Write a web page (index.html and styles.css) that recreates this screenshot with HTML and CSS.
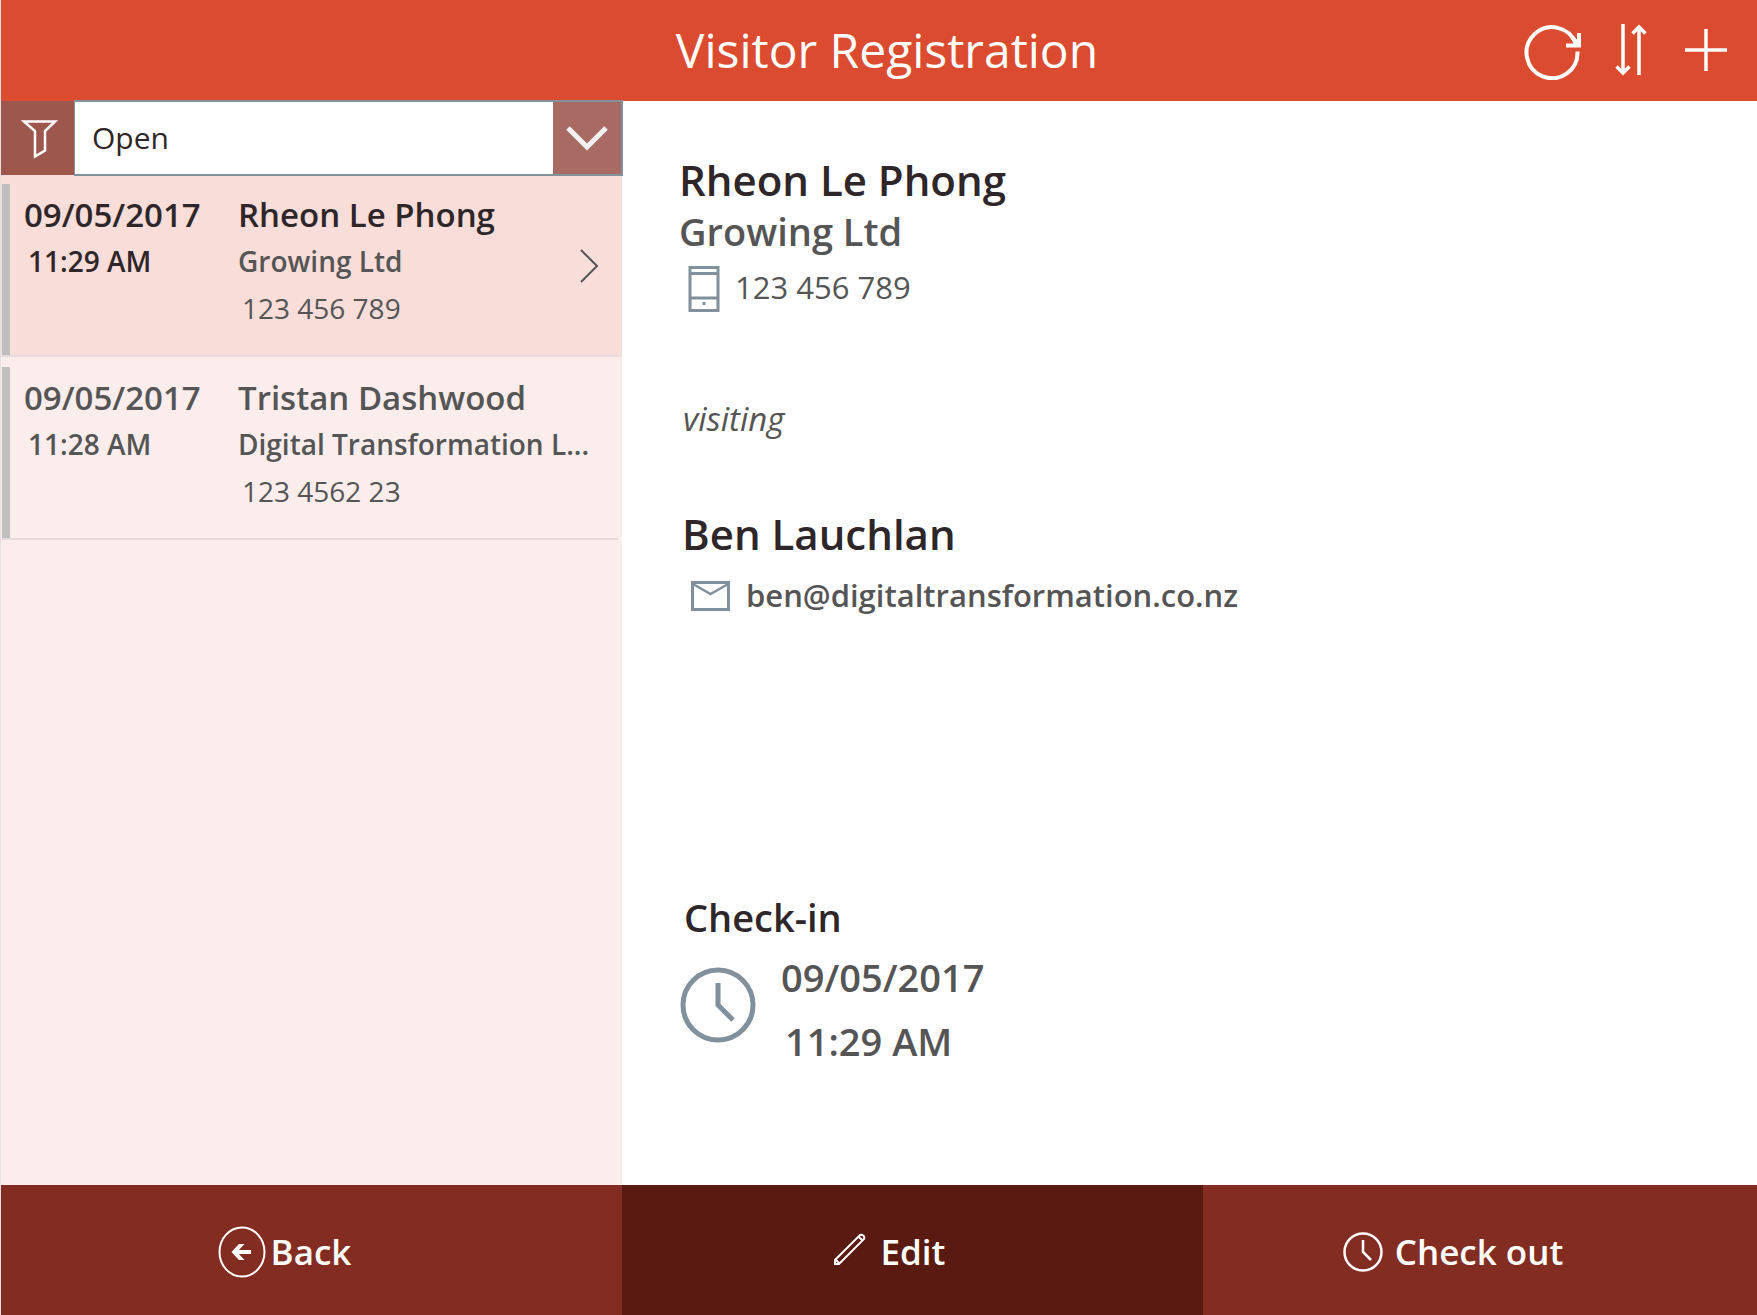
FILE: index.html
```
<!DOCTYPE html>
<html lang="en">
<head>
    <meta charset="UTF-8">
    <meta name="viewport" content="width=device-width, initial-scale=1.0">
    <title>Visitor Registration</title>
    <link rel="stylesheet" href="styles.css">
</head>
<body>
    <header class="topbar">
        <h1>Visitor Registration</h1>
        <div class="topbar-actions">
            <button type="button" class="icon-button" aria-label="Refresh">
                <svg width="59" height="60" viewBox="0 0 59 60" fill="none" stroke="#fff" stroke-width="4">
                    <path d="M55.500 31.500A25.500 25.500 0 1 1 54 24"/>
                    <path d="M44 25.500H57V13"/>
                    <path d="M50 17L57 25.500"/>
                </svg>
            </button>
            <button type="button" class="icon-button" aria-label="Sort">
                <svg width="38" height="52" viewBox="0 0 38 52" fill="none" stroke="#fff" stroke-width="3.500">
                    <path d="M9 0V49M2.500 42.500L9 49L15.500 42.500"/>
                    <path d="M25 51V3M18.500 9.500L25 3L31.500 9.500"/>
                </svg>
            </button>
            <button type="button" class="icon-button" aria-label="New visitor">
                <svg width="42" height="42" viewBox="0 0 42 42" fill="none" stroke="#fff" stroke-width="3.500">
                    <path d="M21 0V42M0 21H42"/>
                </svg>
            </button>
        </div>
    </header>

    <div class="content">
        <aside class="sidebar">
            <div class="filter">
                <label class="filter-icon" for="status" aria-label="Filter by status">
                    <svg width="40" height="42" viewBox="0 0 40 42" fill="none" stroke="#fff" stroke-width="2.500">
                        <path d="M4 4.500H35L25 14V33.500L15 39.500V14Z"/>
                    </svg>
                </label>
                <div class="filter-select">
                    <select id="status">
                        <option>Open</option>
                        <option>Closed</option>
                    </select>
                    <span class="filter-arrow">
                        <svg width="42" height="26" viewBox="0 0 42 26" fill="none" stroke="#f2f2f2" stroke-width="5">
                            <path d="M2 3L21 22L40 3"/>
                        </svg>
                    </span>
                </div>
            </div>

            <nav class="visitors">
                <a href="#" class="visitor selected">
                    <div class="visitor-row">
                        <div class="visitor-when">
                            <div class="line-1">09/05/2017</div>
                            <div class="line-2 indent">11:29 AM</div>
                        </div>
                        <div class="visitor-info">
                            <div class="line-1">Rheon Le Phong</div>
                            <div class="line-2 muted">Growing Ltd</div>
                            <div class="line-3 indent">123 456 789</div>
                        </div>
                        <svg class="visitor-arrow" width="20" height="36" viewBox="0 0 20 36" fill="none" stroke="#555" stroke-width="2">
                            <path d="M2 2L18 18L2 34"/>
                        </svg>
                    </div>
                </a>
                <a href="#" class="visitor">
                    <div class="visitor-row">
                        <div class="visitor-when">
                            <div class="line-1">09/05/2017</div>
                            <div class="line-2 indent">11:28 AM</div>
                        </div>
                        <div class="visitor-info">
                            <div class="line-1">Tristan Dashwood</div>
                            <div class="line-2 muted">Digital Transformation L...</div>
                            <div class="line-3 indent">123 4562 23</div>
                        </div>
                    </div>
                </a>
            </nav>
        </aside>

        <main class="details">
            <section>
                <h2>Rheon Le Phong</h2>
                <div class="company">Growing Ltd</div>
                <div class="contact">
                    <svg width="32" height="50" viewBox="0 0 32 50" fill="none" stroke="#80909c" stroke-width="3">
                        <path d="M2 5.500H30V48.500H2ZM2 11.500H30M2 36H30"/>
                        <path d="M14.500 41.500H17.500"/>
                    </svg>
                    <span>123 456 789</span>
                </div>
            </section>

            <p class="visiting">visiting</p>

            <section class="host">
                <h2>Ben Lauchlan</h2>
                <div class="contact">
                    <svg width="40" height="32" viewBox="0 0 40 32" fill="none" stroke="#80909c" stroke-width="3">
                        <path d="M1.500 3.500H37.500V30.500H1.500Z"/>
                        <path d="M2 5L19.500 15L37 5" stroke-width="2.500"/>
                    </svg>
                    <a href="#">ben@digitaltransformation.co.nz</a>
                </div>
            </section>

            <section class="checkin">
                <h3>Check-in</h3>
                <div class="checkin-row">
                    <svg width="76" height="76" viewBox="0 0 76 76" fill="none" stroke="#80909c" stroke-width="5">
                        <circle cx="38" cy="38" r="35"/>
                        <path d="M38 16V38L53 53"/>
                    </svg>
                    <div class="checkin-time">
                        <div>09/05/2017</div>
                        <div class="indent">11:29 AM</div>
                    </div>
                </div>
            </section>
        </main>
    </div>

    <footer class="actions">
        <button type="button" class="action back">
            <svg width="48" height="52" viewBox="0 0 48 52" fill="none" stroke="#fff">
                <ellipse cx="24" cy="26" rx="22.500" ry="24.500" stroke-width="2"/>
                <path d="M33 26H16" stroke-width="4"/>
                <path d="M13.500 26L21 18H26.500L19 26L26.500 34H21Z" fill="#fff" stroke="none"/>
            </svg>
            Back
        </button>
        <button type="button" class="action edit">
            <svg width="32" height="38" viewBox="0 0 32 38" fill="none" stroke="#fff" stroke-width="2">
                <path d="M1 31V27L26 2A3 3 0 0 1 30 6L5 31Z"/>
                <path d="M1.500 26.500L5.500 30.500M24.500 3.500L28.500 7.500"/>
            </svg>
            Edit
        </button>
        <button type="button" class="action checkout">
            <svg width="40" height="40" viewBox="0 0 40 40" fill="none" stroke="#fff" stroke-width="2.500">
                <circle cx="20" cy="20" r="18.500"/>
                <path d="M20 8V20L28 28"/>
            </svg>
            Check out
        </button>
    </footer>
</body>
</html>
```

FILE: styles.css
```
* {
    margin: 0;
    padding: 0;
    box-sizing: border-box;
}

body {
    display: flex;
    flex-direction: column;
    min-height: 100vh;
    border-left: 1px solid #e4e0e0;
    font-family: "Open Sans", "Noto Sans", sans-serif;
    font-weight: 600;
    color: #2e2628;
    background: #fff;
}

button, select {
    font: inherit;
    border: 0;
    cursor: pointer;
}

a {
    color: inherit;
    text-decoration: none;
}

svg {
    display: block;
    flex: none;
}

/* Header */
.topbar {
    display: grid;
    grid-template-columns: 1fr auto 1fr;
    align-items: center;
    height: 101px;
    padding: 0 30px 2px 46px;
    color: #fff;
    background: #db4b2f;
}

.topbar h1 {
    grid-column: 2;
    font-size: 48px;
    line-height: 60px;
    font-weight: 400;
}

.topbar-actions {
    display: flex;
    justify-content: flex-end;
    align-items: center;
    gap: 33px;
}

.icon-button {
    background: none;
}

/* Columns */
.content {
    flex: 1;
    display: grid;
    grid-template-columns: 621fr 1135fr;
}

.sidebar {
    background: #fbedeb;
    min-width: 0;
}

/* Filter */
.filter {
    display: flex;
    height: 74px;
}

.filter-icon {
    display: flex;
    align-items: center;
    justify-content: center;
    width: 73px;
    padding-left: 4px;
    background: #9d574c;
}

.filter-select {
    position: relative;
    z-index: 1;
    flex: 1;
    margin: -1px -1px -1px 0;
    border: 2px solid #82919c;
    border-left-width: 1px;
}

.filter-select select {
    width: 100%;
    height: 100%;
    padding: 0 84px 2px 17px;
    appearance: none;
    border-radius: 0;
    font-size: 30px;
    font-weight: 400;
    color: #2e2628;
    background: #fff;
}

.filter-arrow {
    position: absolute;
    top: 0;
    right: 0;
    bottom: 0;
    display: flex;
    align-items: center;
    justify-content: center;
    width: 68px;
    background: #a86b64;
    pointer-events: none;
}

/* Visitor list */
.visitors {
    display: flex;
    flex-direction: column;
    gap: 1px;
}

.visitor {
    padding: 9px 4px 0 1px;
    color: #555;
}

.visitor.selected {
    color: #2e2628;
    background: #f9ddd9;
}

.visitor-row {
    display: flex;
    border-bottom: 2px solid #e6dada;
}

.visitor-row::before {
    content: "";
    width: 8px;
    background: #c0bfbf;
}

.visitor-when {
    width: 213px;
    padding: 10px 0 24px 14px;
}

.visitor-info {
    flex: 1;
    min-width: 0;
    padding: 10px 0 24px 15px;
}

.line-1 {
    font-size: 33px;
    line-height: 42px;
}

.line-2 {
    font-size: 28px;
    line-height: 50px;
    white-space: nowrap;
    overflow: hidden;
    text-overflow: ellipsis;
}

.line-3 {
    font-size: 28px;
    line-height: 45px;
    font-weight: 400;
    color: #555;
}

.muted {
    color: #555;
}

.indent {
    padding-left: 4px;
}

.visitor-arrow {
    margin: 64px 19px 0 0;
}

/* Details */
.details {
    display: flex;
    flex-direction: column;
    padding: 51px 40px 112px 57px;
}

.details h2 {
    font-size: 42px;
    line-height: 56px;
    font-weight: 600;
}

.company {
    font-size: 38px;
    line-height: 46px;
    color: #555;
}

.contact {
    display: flex;
    align-items: center;
    gap: 15px;
    height: 66px;
    padding-left: 9px;
    font-size: 31px;
    color: #555;
}

.contact span {
    font-weight: 400;
}

.visiting {
    margin-top: 77px;
    padding-left: 4px;
    font-size: 33px;
    line-height: 44px;
    font-style: italic;
    font-weight: 400;
    color: #555;
}

.host {
    margin-top: 65px;
    padding-left: 3px;
}

.checkin {
    margin-top: auto;
}

.checkin h3 {
    padding-left: 5px;
    font-size: 38px;
    line-height: 48px;
    font-weight: 600;
}

.checkin-row {
    display: flex;
    gap: 25px;
    padding: 4px 0 0 1px;
}

.checkin-row svg {
    margin-top: 22px;
}

.checkin-time {
    font-size: 38px;
    line-height: 64px;
    color: #555;
}

/* Footer */
.actions {
    display: grid;
    grid-template-columns: 621fr 581fr 554fr;
    height: 130px;
}

.action {
    display: flex;
    align-items: center;
    justify-content: center;
    padding: 3px 54px 0 0;
    font-size: 35px;
    color: #fff;
    background: #832d22;
}

.back {
    gap: 5px;
}

.edit {
    gap: 15px;
    padding-right: 46px;
    background: #591a11;
}

.checkout {
    gap: 12px;
}
```
